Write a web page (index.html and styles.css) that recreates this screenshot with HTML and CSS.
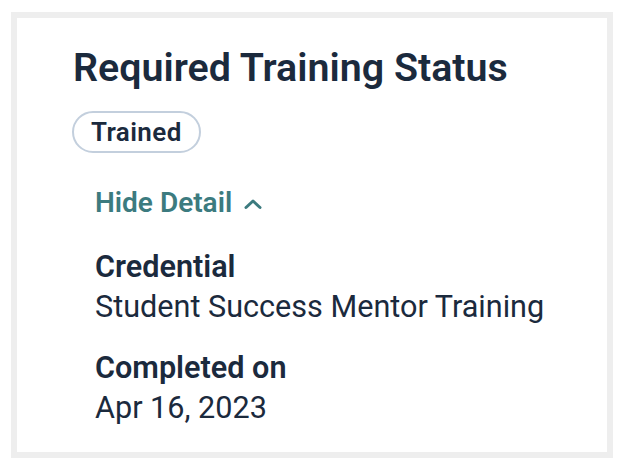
FILE: index.html
```html
<!DOCTYPE html>
<html>
<head>
<meta charset="utf-8">
<link rel="stylesheet" href="styles.css">
</head>
<body>
<div class="card">
  <h2 class="title">Required Training Status</h2>
  <span class="badge">Trained</span>
  <div class="detail">
    <button class="toggle">Hide Detail
      <svg class="chev" width="18" height="12" viewBox="0 0 18 12"><path d="M2 9.5 L9 3 L16 9.5" fill="none" stroke="currentColor" stroke-width="3" stroke-linecap="round" stroke-linejoin="round"/></svg>
    </button>
    <dl class="fields">
      <dt>Credential</dt>
      <dd>Student Success Mentor Training</dd>
      <dt class="next">Completed on</dt>
      <dd>Apr 16, 2023</dd>
    </dl>
  </div>
</div>
</body>
</html>
```
FILE: styles.css
```css
html, body { margin: 0; padding: 0; background: #ffffff; }
body {
  font-family: Roboto, "Noto Sans", sans-serif;
  color: #1b2a3d;
  padding: 12px 0 0 11px;
}
.card {
  width: 590px;
  height: 434px;
  border: 6px solid #eeeeee;
  box-sizing: content-box;
  display: flex;
  flex-direction: column;
  align-items: flex-start;
}
.title {
  margin: 30px 0 0 56px;
  font-size: 39.4px;
  font-weight: 600;
  line-height: 40px;
}
.badge {
  display: block;
  box-sizing: border-box;
  margin: 23px 0 0 55px;
  border: 2px solid #c3cfdd;
  border-radius: 22px;
  padding: 0 17px;
  height: 42px;
  line-height: 38px;
  font-size: 26px;
  font-weight: 600;
  letter-spacing: 0.4px;
}
.detail {
  margin: 34px 0 0 78px;
  display: flex;
  flex-direction: column;
  align-items: flex-start;
}
.toggle {
  display: flex;
  align-items: center;
  gap: 12px;
  background: none;
  border: 0;
  padding: 0;
  font-family: inherit;
  font-size: 28px;
  font-weight: 600;
  color: #3c7b7f;
  line-height: 32px;
  height: 32px;
}
.chev { display: block; margin-top: 2px; }
.fields { margin: 27px 0 0 0; }
.fields dt {
  font-size: 30.6px;
  font-weight: 600;
  line-height: 41px;
}
.fields dt.next { margin-top: 20px; }
.fields dd {
  margin: 0;
  font-size: 30.6px;
  line-height: 40px;
}
```
